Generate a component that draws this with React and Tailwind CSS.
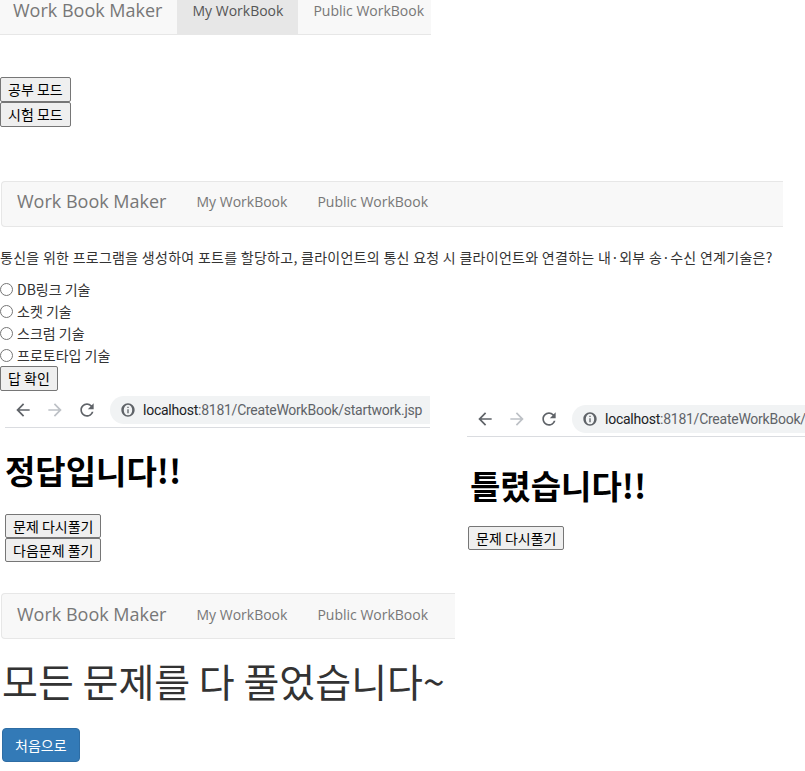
import React from "react";

const font = { fontFamily: '"Open Sans", "Noto Sans CJK KR", sans-serif' };
const kr = { fontFamily: '"Noto Sans CJK KR", sans-serif' };

const NavBar = ({ className, active, itemPad = "", brandPad = "pl-[15px]" }) => (
  <div className={`flex items-stretch whitespace-nowrap bg-[#f8f8f8] border-[#e7e7e7] ${className}`}>
    <span className={`flex shrink-0 items-center pr-[15px] text-[18px] text-[#777] ${brandPad} ${itemPad}`}>Work Book Maker</span>
    <span
      className={`flex shrink-0 items-center px-[15px] text-[14px] ${itemPad} ${
        active ? "bg-[#e7e7e7] text-[#555]" : "text-[#777]"
      }`}
    >
      My WorkBook
    </span>
    <span className={`flex shrink-0 items-center px-[15px] text-[14px] text-[#777] ${itemPad}`}>Public WorkBook</span>
  </div>
);

const Btn = ({ children, className = "" }) => (
  <button
    className={`block bg-[#efefef] border border-[#767676] rounded-[2px] px-[7px] text-[14px] leading-[22px] text-black whitespace-nowrap ${className}`}
    style={kr}
  >
    {children}
  </button>
);

const BrowserBar = ({ url, className = "" }) => (
  <div className={`flex items-center h-[35px] border-b border-[#dadce0] whitespace-nowrap ${className}`}>
    <svg width="20" height="20" viewBox="0 0 24 24" className="ml-[8px] shrink-0" fill="#5f6368">
      <path d="M20 11H7.83l5.59-5.59L12 4l-8 8 8 8 1.41-1.41L7.83 13H20v-2z" />
    </svg>
    <svg width="20" height="20" viewBox="0 0 24 24" className="ml-[12px] shrink-0" fill="#bdc1c6">
      <path d="M12 4l-1.41 1.41L16.17 11H4v2h12.17l-5.58 5.59L12 20l8-8z" />
    </svg>
    <svg width="20" height="20" viewBox="0 0 24 24" className="ml-[12px] shrink-0" fill="#5f6368">
      <path d="M17.65 6.35A7.958 7.958 0 0 0 12 4c-4.42 0-7.99 3.58-7.99 8s3.57 8 7.99 8c3.73 0 6.84-2.55 7.73-6h-2.08A5.99 5.99 0 0 1 12 18c-3.31 0-6-2.69-6-6s2.690-6 6-6c1.66 0 3.14.69 4.22 1.78L13 11h7V4l-2.35 2.35z" />
    </svg>
    <div className="ml-[13px] flex flex-1 min-w-0 items-center h-[28px] bg-[#f1f3f4] rounded-l-full pl-[10px] overflow-hidden">
      <svg width="16" height="16" viewBox="0 0 24 24" fill="#5f6368" className="shrink-0">
        <path d="M11 7h2v2h-2zm0 4h2v6h-2zm1-9C6.48 2 2 6.48 2 12s4.48 10 10 10 10-4.48 10-10S17.52 2 12 2zm0 18c-8.41 0-8.41-16 0-16s8.41 16 0 16z" />
      </svg>
      <span className="ml-[7px] text-[14px] text-[#202124] tracking-[-0.25px]" style={{ fontFamily: '"Roboto", sans-serif' }}>
        localhost<span className="text-[#5f6368]">{url}</span>
      </span>
    </div>
  </div>
);

const Radio = ({ label }) => (
  <label className="flex items-center h-[22px] text-[14px] text-[#333]" style={kr}>
    <span className="inline-block w-[13px] h-[13px] rounded-full border border-[#767676] bg-white" />
    <span className="ml-[4px]">{label}</span>
  </label>
);

export default function App() {
  return (
    <div className="w-[805px] h-[771px] bg-white overflow-hidden" style={font}>
      {/* top menu */}
      <NavBar className="w-[431px] h-[35px] border-b" itemPad="pb-[13px]" brandPad="pl-[13px]" active />
      <div className="mt-[42px]">
        <Btn className="leading-[23px] px-[6px]">공부 모드</Btn>
        <Btn className="leading-[23px] px-[6px]">시험 모드</Btn>
      </div>

      {/* study mode */}
      <NavBar className="mt-[54px] ml-[1px] w-[782px] h-[46px] border border-r-0 rounded-l-[4px]" itemPad="pb-[5px]" />
      <div className="mt-[20px] text-[14px] leading-[20px] text-[#333] whitespace-nowrap tracking-[0.28px]" style={kr}>
        통신을 위한 프로그램을 생성하여 포트를 할당하고, 클라이언트의 통신 요청 시 클라이언트와 연결하는 내·외부 송·수신 연계기술은?
      </div>
      <div className="mt-[11px]">
        <Radio label="DB링크 기술" />
        <Radio label="소켓 기술" />
        <Radio label="스크럼 기술" />
        <Radio label="프로토타입 기술" />
      </div>
      <Btn className="leading-[23px] px-[6px]">답 확인</Btn>

      {/* result screens */}
      <div className="flex items-start">
        <div className="w-[430px] shrink-0 mt-[2px]">
          <BrowserBar url=":8181/CreateWorkBook/startwork.jsp" className="ml-[5px]" />
          <h1 className="ml-[5px] mt-[22px] text-[33px] font-bold leading-[40px] text-black" style={kr}>
            정답입니다!!
          </h1>
          <div className="ml-[5px] mt-[24px]">
            <Btn>문제 다시풀기</Btn>
            <Btn>다음문제 풀기</Btn>
          </div>
        </div>
        <div className="ml-[37px] flex-1 min-w-0 mt-[11px]">
          <BrowserBar url=":8181/CreateWorkBook/startwork.jsp" />
          <h1 className="ml-[3px] mt-[28px] text-[33px] font-bold leading-[40px] text-black" style={kr}>
            틀렸습니다!!
          </h1>
          <Btn className="ml-[1px] mt-[21px] leading-[21px]">문제 다시풀기</Btn>
        </div>
      </div>

      {/* finished */}
      <NavBar className="mt-[31px] ml-[1px] w-[454px] h-[46px] border border-r-0 rounded-l-[4px]" itemPad="pb-[4px]" />
      <h1 className="ml-[2px] mt-[16px] text-[39px] leading-[50px] text-[#333] whitespace-nowrap" style={{ ...kr, fontWeight: 400 }}>
        모든 문제를 다 풀었습니다~
      </h1>
      <button className="ml-[2px] mt-[23px] h-[34px] px-[12px] bg-[#337ab7] border border-[#2e6da4] rounded-[4px] text-white text-[14px]" style={kr}>
        처음으로
      </button>
    </div>
  );
}
